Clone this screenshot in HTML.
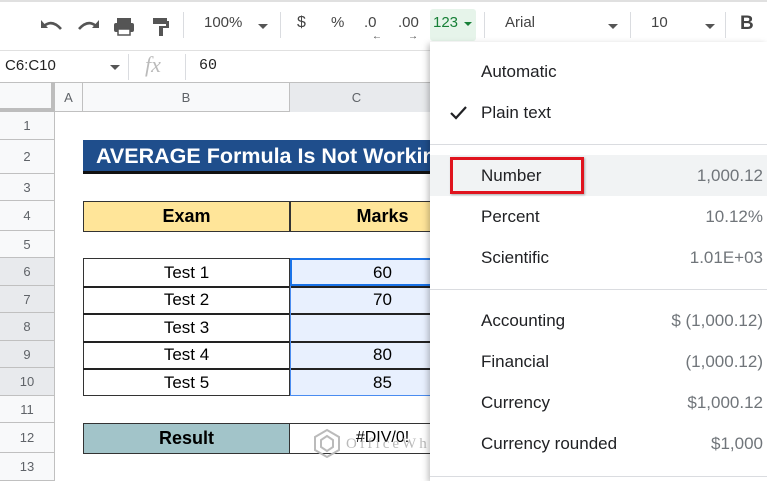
<!DOCTYPE html>
<html><head><meta charset="utf-8"><style>
*{margin:0;padding:0;box-sizing:border-box}
body{width:767px;height:481px;overflow:hidden;background:#fff;font-family:"Liberation Sans",Arial,sans-serif;position:relative}
.a{position:absolute}
.rh{position:absolute;left:0;width:55px;background:#f8f9fa;border-bottom:1px solid #c0c0c0;border-right:1px solid #c0c0c0;color:#5f6368;font-size:13px;text-align:center}
.rh.s{background:#e8eaed}
.cell{position:absolute;font-size:16px;text-align:center;color:#000}
.mi{position:absolute;left:481px;font-size:17px;color:#202124}
.mv{position:absolute;right:4px;font-size:17px;color:#70757a;text-align:right}
.sep{position:absolute;left:430px;width:337px;height:1px;background:#dadce0}
.tb{position:absolute;top:14px;font-size:15px;color:#444}
</style></head><body>
<!-- toolbar -->
<div class="a" style="left:0;top:0;width:767px;height:2px;background:#e0e0e0"></div>
<svg class="a" style="left:38px;top:14px" width="110" height="24" viewBox="0 0 110 24">
<path d="M6 12 Q14 5 23 15" stroke="#555" stroke-width="2.6" fill="none"/><path d="M3 6 L3 14 L10 14 Z" fill="#555"/>
<path d="M58 12 Q50 5 41 15" stroke="#555" stroke-width="2.6" fill="none"/><path d="M61 6 L61 14 L54 14 Z" fill="#555"/>
<rect x="79" y="4" width="14" height="5" fill="#555"/><rect x="76" y="9" width="20" height="9" rx="2" fill="#555"/><rect x="80" y="15" width="12" height="6" fill="#fff" stroke="#555" stroke-width="1.5"/>
</svg>
<svg class="a" style="left:151px;top:16px" width="20" height="22"><rect x="2" y="2" width="14" height="6" fill="#555"/><rect x="15" y="5" width="3" height="6" fill="#555"/><rect x="8" y="10" width="10" height="2" fill="#555"/><rect x="8" y="10" width="4" height="10" fill="#555"/></svg>
<div class="a" style="left:183px;top:12px;width:1px;height:26px;background:#dadce0"></div>
<div class="tb" style="left:204px">100%</div>
<div class="a" style="left:258px;top:24px;border:5px solid transparent;border-top-color:#555"></div>
<div class="a" style="left:280px;top:12px;width:1px;height:26px;background:#dadce0"></div>
<div class="tb" style="left:297px;font-size:16px">$</div>
<div class="tb" style="left:331px">%</div>
<div class="tb" style="left:364px">.0</div>
<div class="tb" style="left:398px">.00</div>
<div class="a" style="left:372px;top:31px;font-size:10px;color:#444">&larr;</div>
<div class="a" style="left:408px;top:31px;font-size:10px;color:#444">&rarr;</div>
<div class="a" style="left:430px;top:9px;width:46px;height:32px;background:#e6f4ea;border-radius:3px"></div>
<div class="tb" style="left:433px;color:#188038">123</div>
<div class="a" style="left:464px;top:22px;border:4px solid transparent;border-top-color:#188038"></div>
<div class="a" style="left:484px;top:12px;width:1px;height:26px;background:#dadce0"></div>
<div class="tb" style="left:505px">Arial</div>
<div class="a" style="left:608px;top:24px;border:5px solid transparent;border-top-color:#555"></div>
<div class="a" style="left:630px;top:12px;width:1px;height:26px;background:#dadce0"></div>
<div class="tb" style="left:651px">10</div>
<div class="a" style="left:705px;top:24px;border:5px solid transparent;border-top-color:#555"></div>
<div class="a" style="left:725px;top:12px;width:1px;height:26px;background:#dadce0"></div>
<div class="tb" style="left:740px;font-weight:bold;font-size:19px;top:13px">B</div>
<!-- formula bar -->
<div class="a" style="left:0;top:50px;width:767px;height:1px;background:#e0e0e0"></div>
<div class="a" style="left:5px;top:57px;font-size:15px;color:#222">C6:C10</div>
<div class="a" style="left:110px;top:65px;border:5px solid transparent;border-top-color:#555"></div>
<div class="a" style="left:128px;top:54px;width:1px;height:26px;background:#dadce0"></div>
<div class="a" style="left:145px;top:52px;font-size:22px;color:#bbb;font-style:italic;font-family:'Liberation Serif',serif">fx</div>
<div class="a" style="left:185px;top:54px;width:1px;height:26px;background:#dadce0"></div>
<div class="a" style="left:199px;top:57px;font-size:15px;color:#222;font-family:'Liberation Mono',monospace">60</div>
<!-- column headers -->
<div class="a" style="left:0;top:82px;width:767px;height:30px;background:#f8f9fa;border-top:1px solid #c0c0c0;border-bottom:1px solid #c0c0c0"></div>
<div class="a" style="left:0;top:82px;width:55px;height:30px;border-right:4px solid #bdbdbd;border-bottom:4px solid #bdbdbd"></div>
<div class="a" style="left:55px;top:83px;width:28px;height:29px;border-right:1px solid #c0c0c0;text-align:center;font-size:13px;color:#5f6368;line-height:29px">A</div>
<div class="a" style="left:83px;top:83px;width:207px;height:29px;border-right:1px solid #c0c0c0;text-align:center;font-size:13px;color:#5f6368;line-height:29px">B</div>
<div class="a" style="left:290px;top:83px;width:150px;height:29px;background:#e8eaed;text-align:center;font-size:13px;color:#5f6368;line-height:29px;padding-right:17px">C</div>
<!-- row headers -->
<div class="rh" style="top:112px;height:28px;line-height:28px">1</div>
<div class="rh" style="top:140px;height:34px;line-height:34px">2</div>
<div class="rh" style="top:174px;height:27px;line-height:27px">3</div>
<div class="rh" style="top:201px;height:30px;line-height:30px">4</div>
<div class="rh" style="top:231px;height:27px;line-height:27px">5</div>
<div class="rh s" style="top:258px;height:28px;line-height:28px">6</div>
<div class="rh s" style="top:286px;height:27px;line-height:27px">7</div>
<div class="rh s" style="top:313px;height:28px;line-height:28px">8</div>
<div class="rh s" style="top:341px;height:27px;line-height:27px">9</div>
<div class="rh s" style="top:368px;height:28px;line-height:28px">10</div>
<div class="rh" style="top:396px;height:27px;line-height:27px">11</div>
<div class="rh" style="top:423px;height:30px;line-height:30px">12</div>
<div class="rh" style="top:453px;height:28px;line-height:28px">13</div>
<!-- title -->
<div class="a" style="left:83px;top:140px;width:350px;height:34px;background:#1f4e8c;border-bottom:3px solid #111;color:#fff;font-weight:bold;font-size:21.5px;line-height:32px;padding-left:13px;white-space:nowrap;overflow:hidden">AVERAGE Formula Is Not Working</div>
<!-- header row -->
<div class="a" style="left:83px;top:201px;width:350px;height:31px;background:#ffe599;border:1.5px solid #333"></div>
<div class="a" style="left:289px;top:201px;width:1.5px;height:31px;background:#333"></div>
<div class="cell" style="left:83px;top:206px;width:207px;font-weight:bold;font-size:18px">Exam</div>
<div class="cell" style="left:290px;top:206px;width:185px;font-weight:bold;font-size:18px">Marks</div>
<!-- data -->
<div class="a" style="left:290px;top:258px;width:145px;height:138px;background:#e8f0fe"></div>
<div class="a" style="left:83px;top:258px;width:350px;height:138px;border:1.5px solid #333;border-right:none"></div>
<div class="a" style="left:83px;top:286px;width:350px;height:1.5px;background:#222"></div>
<div class="a" style="left:83px;top:313px;width:350px;height:1.5px;background:#222"></div>
<div class="a" style="left:83px;top:341px;width:350px;height:1.5px;background:#222"></div>
<div class="a" style="left:83px;top:368px;width:350px;height:1.5px;background:#222"></div>
<div class="a" style="left:289px;top:258px;width:1.5px;height:138px;background:#333"></div>
<div class="a" style="left:290px;top:258px;width:145px;height:138px;border:1px solid #4a8cf0;border-right:none"></div>
<div class="a" style="left:290px;top:258px;width:145px;height:28px;border:2px solid #1a73e8;border-right:none"></div>
<div class="cell" style="left:83px;top:263px;width:207px;font-size:17px">Test 1</div>
<div class="cell" style="left:83px;top:290px;width:207px;font-size:17px">Test 2</div>
<div class="cell" style="left:83px;top:318px;width:207px;font-size:17px">Test 3</div>
<div class="cell" style="left:83px;top:345px;width:207px;font-size:17px">Test 4</div>
<div class="cell" style="left:83px;top:373px;width:207px;font-size:17px">Test 5</div>
<div class="cell" style="left:290px;top:263px;width:185px;font-size:17px">60</div>
<div class="cell" style="left:290px;top:290px;width:185px;font-size:17px">70</div>
<div class="cell" style="left:290px;top:345px;width:185px;font-size:17px">80</div>
<div class="cell" style="left:290px;top:373px;width:185px;font-size:17px">85</div>
<!-- result -->
<div class="a" style="left:83px;top:423px;width:207px;height:31px;background:#a2c4c9;border:1.5px solid #333"></div>
<div class="a" style="left:290px;top:423px;width:145px;height:31px;border-top:1.5px solid #333;border-bottom:1.5px solid #333"></div>
<div class="cell" style="left:83px;top:428px;width:207px;font-weight:bold;font-size:18px">Result</div>
<div class="cell" style="left:290px;top:429px;width:185px">#DIV/0!</div>
<div class="a" style="left:346px;top:436px;font-size:15px;color:#aaa;font-family:'Liberation Serif',serif;letter-spacing:3px;opacity:.8">OfficeWheel</div>
<svg class="a" style="left:312px;top:428px" width="30" height="30"><path d="M15 2 L27 9 L27 22 L15 29 L3 22 L3 9Z" fill="none" stroke="#bbb" stroke-width="2"/><path d="M15 8 L21 12 L21 19 L15 23 L9 19 L9 12Z" fill="none" stroke="#bbb" stroke-width="2"/></svg>
<!-- menu -->
<div class="a" style="left:430px;top:42px;width:337px;height:439px;background:#fff;box-shadow:-2px 2px 6px rgba(0,0,0,.25)"></div>
<div class="mi" style="top:62px">Automatic</div>
<svg class="a" style="left:449px;top:105px" width="20" height="16"><path d="M2 8 L7 13 L17 2" stroke="#202124" stroke-width="2.2" fill="none"/></svg>
<div class="mi" style="top:103px">Plain text</div>
<div class="sep" style="top:144px"></div>
<div class="a" style="left:430px;top:155px;width:337px;height:41px;background:#f1f3f4"></div>
<div class="a" style="left:450px;top:157px;width:134px;height:37px;border:3px solid #e0141e;box-shadow:1px 1px 2px rgba(0,0,0,.3)"></div>
<div class="mi" style="top:166px">Number</div><div class="mv" style="top:166px">1,000.12</div>
<div class="mi" style="top:207px">Percent</div><div class="mv" style="top:207px">10.12%</div>
<div class="mi" style="top:248px">Scientific</div><div class="mv" style="top:248px">1.01E+03</div>
<div class="sep" style="top:289px"></div>
<div class="mi" style="top:311px">Accounting</div><div class="mv" style="top:311px">$ (1,000.12)</div>
<div class="mi" style="top:352px">Financial</div><div class="mv" style="top:352px">(1,000.12)</div>
<div class="mi" style="top:393px">Currency</div><div class="mv" style="top:393px">$1,000.12</div>
<div class="mi" style="top:434px">Currency rounded</div><div class="mv" style="top:434px">$1,000</div>
<div class="sep" style="top:476px"></div>
</body></html>
